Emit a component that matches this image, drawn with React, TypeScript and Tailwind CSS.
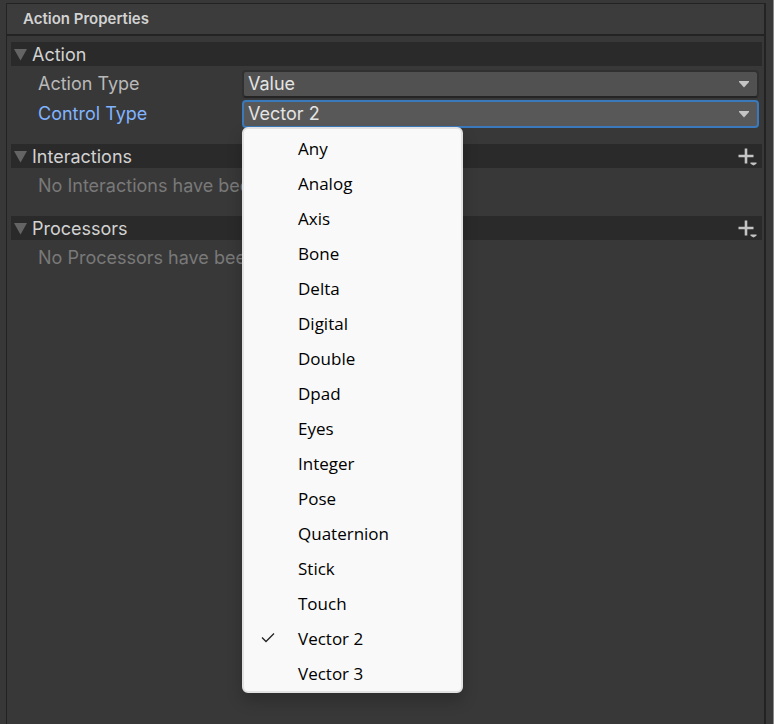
import { useState } from 'react';
import type { ReactNode } from 'react';

const actionTypes = ['Value', 'Button', 'Pass Through'];

const controlTypes = [
  'Any',
  'Analog',
  'Axis',
  'Bone',
  'Delta',
  'Digital',
  'Double',
  'Dpad',
  'Eyes',
  'Integer',
  'Pose',
  'Quaternion',
  'Stick',
  'Touch',
  'Vector 2',
  'Vector 3',
];

const DropdownArrow = () => (
  <svg className="pointer-events-none absolute right-[9px] top-1/2 h-2 w-3 -translate-y-1/2" viewBox="0 0 12 8" aria-hidden="true">
    <path d="M1 1h10v1L6 7.5 1 2z" fill="#c4c4c4" />
  </svg>
);

const AddButton = ({ label }: { label: string }) => (
  <button type="button" aria-label={label} className="flex h-6 w-6 items-center justify-center">
    <svg className="h-6 w-6" viewBox="0 0 24 24" aria-hidden="true">
      <path d="M8 3.5v15M0.5 11h15" stroke="#c4c4c4" strokeWidth="2.6" />
      <path d="M12.5 17.5h6v1.2L15.5 20.5l-3-1.8z" fill="#c4c4c4" />
    </svg>
  </button>
);

const Section = ({ title, action, children }: { title: string; action?: ReactNode; children: ReactNode }) => (
  <section>
    <div className="flex h-6 items-center justify-between bg-[#2a2a2a] pl-[3px] pt-0.5">
      <h2>
        <button type="button" aria-expanded="true" className="flex items-center gap-[5px] text-lg leading-5 text-[#d2d2d2]">
          <svg className="h-3 w-[13px] shrink-0" viewBox="0 0 13 12" aria-hidden="true">
            <path d="M0 0h13L6.5 11.5z" fill="#646464" />
          </svg>
          {title}
        </button>
      </h2>
      {action}
    </div>
    {children}
  </section>
);

export default function App() {
  const [actionType, setActionType] = useState('Value');
  const [controlType, setControlType] = useState('Vector 2');
  const [menuOpen, setMenuOpen] = useState(true);

  return (
    <div className="flex min-h-screen flex-col border-r border-[#8a8a8a] bg-[#383838] pl-1.5 pr-[7px] pt-[3px] font-['Inter',sans-serif] text-lg text-[#b9b9b9]">
      <main className="flex grow flex-col border-l border-r-2 border-t border-[#232323]">
        <header className="flex h-8 items-center border-b-2 border-[#232323] bg-[#3c3c3c] pl-4">
          <h1 className="text-[15px] font-semibold leading-5 text-[#d2d2d2]">Action Properties</h1>
        </header>

        <div className="flex flex-col gap-4 pl-1 pr-0.5 pt-1.5">
          <Section title="Action">
            <div className="flex flex-col gap-0.5 pl-[27px] pr-[3px] pt-1">
              <div className="flex h-7 items-center">
                <label htmlFor="action-type" className="w-51 shrink-0">
                  Action Type
                </label>
                <div className="relative grow">
                  <select
                    id="action-type"
                    value={actionType}
                    onChange={(e) => setActionType(e.target.value)}
                    className="block h-7 w-full appearance-none rounded border-2 border-[#303030] border-b-[#242424] bg-[#515151] px-1 leading-6 text-[#e4e4e4] outline-none"
                  >
                    {actionTypes.map((type) => (
                      <option key={type}>{type}</option>
                    ))}
                  </select>
                  <DropdownArrow />
                </div>
              </div>

              <div className="flex h-7 items-center">
                <label htmlFor="control-type" className="w-51 shrink-0 text-[#81b4ff]">
                  Control Type
                </label>
                <div className="relative grow">
                  <select
                    id="control-type"
                    value={controlType}
                    onChange={(e) => setControlType(e.target.value)}
                    onMouseDown={(e) => {
                      e.preventDefault();
                      setMenuOpen(!menuOpen);
                    }}
                    className="block h-7 w-full appearance-none rounded border-2 border-[#3a79bb] bg-[#585858] px-1 leading-6 text-[#e4e4e4] outline-none"
                  >
                    {controlTypes.map((type) => (
                      <option key={type}>{type}</option>
                    ))}
                  </select>
                  <DropdownArrow />

                  {menuOpen && (
                    <ul
                      role="menu"
                      className="absolute left-0 top-full z-10 -mt-px w-[221px] rounded-md border-2 border-[#e2e2e2] bg-[#f9f9f9] pt-0.5 font-['Open_Sans',sans-serif] text-black shadow-[0_8px_16px_rgba(0,0,0,0.2)]"
                    >
                      {controlTypes.map((type) => (
                        <li key={type} role="none">
                          <button
                            type="button"
                            role="menuitemradio"
                            aria-checked={type === controlType}
                            onClick={() => {
                              setControlType(type);
                              setMenuOpen(false);
                            }}
                            className="flex h-[35px] w-full items-center pl-4 text-left text-[17px] leading-6 hover:bg-[#f0f0f0]"
                          >
                            <span className="w-[38px] shrink-0">
                              {type === controlType && (
                                <svg className="h-4 w-4" viewBox="0 0 16 16" fill="none" aria-hidden="true">
                                  <path d="M2 6.5l4 4 8-8" stroke="#222222" strokeWidth="1.3" />
                                </svg>
                              )}
                            </span>
                            {type}
                          </button>
                        </li>
                      ))}
                    </ul>
                  )}
                </div>
              </div>
            </div>
          </Section>

          <Section title="Interactions" action={<AddButton label="Add interaction" />}>
            <p className="pt-1 pl-[27px] leading-7 text-[#797979]">No Interactions have been added.</p>
          </Section>

          <Section title="Processors" action={<AddButton label="Add processor" />}>
            <p className="pt-1 pl-[27px] leading-7 text-[#797979]">No Processors have been added.</p>
          </Section>
        </div>
      </main>
    </div>
  );
}
